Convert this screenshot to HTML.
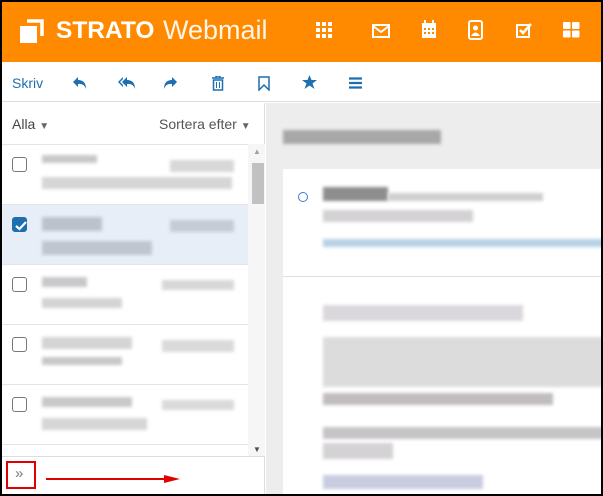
<!DOCTYPE html>
<html><head><style>
*{margin:0;padding:0;box-sizing:border-box}
body{width:603px;height:496px;background:#000;font-family:"Liberation Sans",sans-serif;overflow:hidden;position:relative}
#f{position:absolute;left:2px;top:2px;width:599px;height:492px;background:#fff;overflow:hidden}
.hdr{position:absolute;left:0;top:0;width:599px;height:60px;background:#ff8a00}
.a{position:absolute}
.b{position:absolute;filter:blur(1.6px);background:#c8c8ca}
.ic{position:absolute;top:20px}
.tb{position:absolute;top:60px;left:0;width:599px;height:40px;border-bottom:1px solid #ddd;background:#fff}
.cb{position:absolute;left:10px;width:15px;height:15px;border:1.5px solid #777;border-radius:3px;background:#fff}
.row{position:absolute;left:0;width:246px;height:60px;border-bottom:1px solid #e4e4e4}
</style></head><body><div id="f">
<div class="hdr">
 <svg class="a" style="left:16px;top:14px" width="30" height="30" viewBox="0 0 30 30"><rect x="2" y="10" width="17" height="17" fill="#fff"/><path d="M9 5H24V20" stroke="#fff" stroke-width="3.5" fill="none"/></svg>
 <div class="a" style="left:54px;top:15px;color:#fff;font-size:24px;font-weight:bold;transform:scaleX(1.02);transform-origin:left">STRATO</div>
 <div class="a" style="left:161px;top:13px;color:#fff;font-size:27px;opacity:.92">Webmail</div>
 <svg class="ic" style="left:314px" width="18" height="16"><g fill="#fff"><rect x="0" y="0" width="4" height="4"/><rect x="6" y="0" width="4" height="4"/><rect x="12" y="0" width="4" height="4"/><rect x="0" y="6" width="4" height="4"/><rect x="6" y="6" width="4" height="4"/><rect x="12" y="6" width="4" height="4"/><rect x="0" y="12" width="4" height="4"/><rect x="6" y="12" width="4" height="4"/><rect x="12" y="12" width="4" height="4"/></g></svg>
 <svg class="ic" style="left:370px;top:22px" width="18" height="14"><rect x="1" y="1" width="16" height="12" fill="none" stroke="#fff" stroke-width="2"/><path d="M1 2L9 8L17 2" fill="none" stroke="#fff" stroke-width="2"/></svg>
 <svg class="ic" style="left:419px;top:18px" width="16" height="19"><rect x="1" y="3" width="14" height="15" fill="#fff"/><rect x="3" y="0" width="2" height="4" fill="#fff"/><rect x="11" y="0" width="2" height="4" fill="#fff"/><g fill="#ff8a00"><rect x="3" y="8" width="2" height="2"/><rect x="7" y="8" width="2" height="2"/><rect x="11" y="8" width="2" height="2"/><rect x="3" y="12" width="2" height="2"/><rect x="7" y="12" width="2" height="2"/><rect x="11" y="12" width="2" height="2"/></g></svg>
 <svg class="ic" style="left:466px;top:18px" width="16" height="20"><rect x="1" y="1" width="13" height="18" rx="2" fill="none" stroke="#fff" stroke-width="2"/><circle cx="7.5" cy="8" r="2.5" fill="#fff"/><path d="M3 16Q7.5 9 12 16Z" fill="#fff"/></svg>
 <svg class="ic" style="left:514px;top:20px" width="17" height="16"><rect x="1" y="3" width="12" height="12" fill="none" stroke="#fff" stroke-width="2"/><path d="M4 8L7 11L15 2" fill="none" stroke="#fff" stroke-width="2.5"/></svg>
 <svg class="ic" style="left:561px;top:20px" width="17" height="16"><g fill="#fff"><rect x="0" y="0" width="7.5" height="7" rx="1"/><rect x="9" y="0" width="7.5" height="7" rx="1"/><rect x="0" y="8.5" width="7.5" height="7" rx="1"/><rect x="9" y="8.5" width="7.5" height="7" rx="1"/></g></svg>
</div>
<div class="tb">
 <div class="a" style="left:10px;top:13px;color:#1d6fb0;font-size:14px">Skriv</div>
 <svg class="a" style="left:70px;top:14px" width="16" height="14"><path d="M6 1L1 6L6 11V8Q12 7 14 13Q14 4 6 4Z" fill="#1d6fb0"/></svg>
 <svg class="a" style="left:116px;top:14px" width="18" height="14"><path d="M5 1L0 6L5 11V9L2 6L5 3Z" fill="#1d6fb0"/><path d="M9 1L4 6L9 11V8Q15 7 17 13Q17 4 9 4Z" fill="#1d6fb0"/></svg>
 <svg class="a" style="left:160px;top:14px" width="16" height="14"><path d="M10 1L15 6L10 11V8Q4 7 2 13Q2 4 10 4Z" fill="#1d6fb0"/></svg>
 <svg class="a" style="left:210px;top:14px" width="12" height="15"><path d="M0 2H12M4 2V0H8V2" stroke="#1d6fb0" stroke-width="1.5" fill="none"/><rect x="1.5" y="4" width="9" height="10" fill="none" stroke="#1d6fb0" stroke-width="1.5"/><path d="M4.5 6V12M7.5 6V12" stroke="#1d6fb0"/></svg>
 <svg class="a" style="left:256px;top:14px" width="12" height="15"><path d="M1 1H11V14L6 9L1 14Z" fill="none" stroke="#1d6fb0" stroke-width="1.5"/></svg>
 <svg class="a" style="left:300px;top:13px" width="15" height="15"><path d="M7.5 0L9.5 5H15L10.5 8.5L12.5 14L7.5 10.5L2.5 14L4.5 8.5L0 5H5.5Z" fill="#1d6fb0"/></svg>
 <svg class="a" style="left:347px;top:15px" width="13" height="12"><path d="M0 1.5H13M0 6H13M0 10.5H13" stroke="#1d6fb0" stroke-width="2.2"/></svg>
</div>
<div class="a" style="left:0;top:101px;width:263px;height:391px;border-right:1px solid #ddd;background:#fff">
 <div class="a" style="left:10px;top:13px;font-size:14px;color:#444">Alla <span style="font-size:10px;color:#666">▼</span></div>
 <div class="a" style="left:157px;top:13px;font-size:14px;color:#555">Sortera efter <span style="font-size:10px;color:#666">▼</span></div>
 <div class="a" style="left:0;top:41px;width:263px;border-top:1px solid #e4e4e4"></div>
 <div class="row" style="top:42px"><div class="cb" style="top:12px"></div><div class="b" style="left:40px;top:10px;width:55px;height:8px"></div><div class="b" style="left:168px;top:15px;width:64px;height:12px;background:#d8d8d8"></div><div class="b" style="left:40px;top:32px;width:190px;height:12px;background:#d6d6d6"></div></div>
 <div class="row" style="top:102px;background:#e8eef8"><div class="cb" style="top:12px;background:#1d6fb0;border-color:#1d6fb0"></div><svg class="a" style="left:13px;top:16px" width="12" height="10"><path d="M1 5L4.5 8L11 1" stroke="#fff" stroke-width="2.2" fill="none"/></svg><div class="b" style="left:40px;top:12px;width:60px;height:14px;background:#bcc2cc"></div><div class="b" style="left:40px;top:36px;width:110px;height:14px;background:#c0c6d0"></div><div class="b" style="left:168px;top:15px;width:64px;height:12px;background:#c6ccd6"></div></div>
 <div class="row" style="top:162px"><div class="cb" style="top:12px"></div><div class="b" style="left:40px;top:12px;width:45px;height:10px"></div><div class="b" style="left:40px;top:33px;width:80px;height:10px;background:#d4d4d4"></div><div class="b" style="left:160px;top:15px;width:72px;height:10px;background:#d8d8d8"></div></div>
 <div class="row" style="top:222px"><div class="cb" style="top:12px"></div><div class="b" style="left:40px;top:12px;width:90px;height:12px;background:#d4d4d4"></div><div class="b" style="left:40px;top:32px;width:80px;height:8px"></div><div class="b" style="left:160px;top:15px;width:72px;height:12px;background:#dadada"></div></div>
 <div class="row" style="top:282px"><div class="cb" style="top:12px"></div><div class="b" style="left:40px;top:12px;width:90px;height:10px"></div><div class="b" style="left:40px;top:33px;width:105px;height:12px;background:#d6d6d6"></div><div class="b" style="left:160px;top:15px;width:72px;height:10px;background:#dadada"></div></div>
 <div class="a" style="left:246px;top:41px;width:17px;height:312px;background:#f6f6f6"></div>
 <div class="a" style="left:250px;top:60px;width:12px;height:41px;background:#c1c1c1"></div>
 <div class="a" style="left:251px;top:44px;font-size:8px;color:#a0a0a0">▲</div>
 <div class="a" style="left:251px;top:342px;font-size:8px;color:#505050">▼</div>
 <div class="a" style="left:0;top:353px;width:263px;border-top:1px solid #ddd"></div>
 <div class="a" style="left:4px;top:358px;width:30px;height:28px;border:2px solid #e00000"></div>
 <div class="a" style="left:13px;top:362px;font-size:15px;color:#777">»</div>
 <div class="a" style="left:44px;top:375px;width:120px;height:2px;background:#e00000"></div>
 <svg class="a" style="left:162px;top:370px" width="16" height="12"><path d="M0 2L16 6L0 10Z" fill="#e00000"/></svg>
</div>
<div class="a" style="left:264px;top:101px;width:335px;height:391px;background:#ededed">
 <div class="b" style="left:17px;top:27px;width:158px;height:14px;background:#a8a8a8"></div>
 <div class="a" style="left:17px;top:66px;width:318px;height:330px;background:#fff">
  <div class="a" style="left:15px;top:23px;width:10px;height:10px;border:1.5px solid #3c7dd8;border-radius:50%"></div>
  <div class="b" style="left:40px;top:18px;width:65px;height:14px;background:#8e8e8e"></div>
  <div class="b" style="left:105px;top:24px;width:155px;height:8px;background:#cfcfcf"></div>
  <div class="b" style="left:40px;top:41px;width:150px;height:12px;background:#d4d2d4"></div>
  <div class="b" style="left:40px;top:70px;width:300px;height:8px;background:#b8d2e6"></div>
  <div class="a" style="left:0;top:107px;width:318px;border-top:1px solid #ddd"></div>
  <div class="b" style="left:40px;top:136px;width:200px;height:16px;background:#dad8dc"></div>
  <div class="b" style="left:40px;top:168px;width:280px;height:50px;background:#dcdcdc"></div>
  <div class="b" style="left:40px;top:224px;width:230px;height:12px;background:#c0bcc0"></div>
  <div class="b" style="left:40px;top:258px;width:280px;height:12px;background:#c6c4c6"></div>
  <div class="b" style="left:40px;top:274px;width:70px;height:16px;background:#d4d2d4"></div>
  <div class="b" style="left:40px;top:306px;width:160px;height:14px;background:#c8cce0"></div>
 </div>
</div>
</div></body></html>
